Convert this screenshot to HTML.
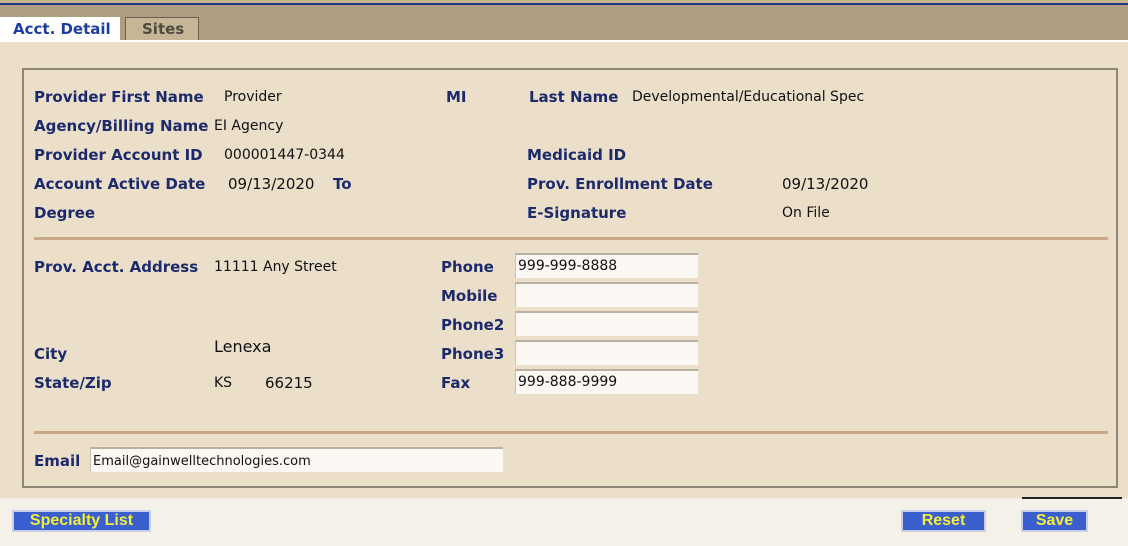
<!DOCTYPE html>
<html><head><style>
body{margin:0;width:1128px;height:546px;overflow:hidden;background:#f4f1e9;font-family:"DejaVu Sans","Liberation Sans",sans-serif;position:relative}
div{position:absolute}
.l{font-weight:bold;font-size:15px;color:#1c2a6b;white-space:nowrap}
.v{font-size:14px;color:#111;white-space:nowrap}
.in{background:#fbf7f3;border-top:2px solid #b8b0a0;border-left:1px solid #c8c0b0;height:25px;box-sizing:border-box;font-size:14px;padding:3px 0 0 2px;color:#111}
.b{background:#3b5fcf;color:#f2ef3a;font-weight:bold;text-align:center;border:2px solid #c8d0e8;box-sizing:border-box;height:22px;line-height:17px;font-family:"Liberation Sans Narrow","Liberation Sans",sans-serif;font-size:16px}
</style></head><body>
<div style="left:0;top:0;width:1128px;height:3px;background:#c9b58a"></div>
<div style="left:0;top:3px;width:1128px;height:2px;background:#23348a"></div>
<div style="left:0;top:5px;width:1128px;height:35px;background:#af9d80"></div>
<div style="left:0;top:40px;width:1128px;height:2px;background:#fff"></div>
<div style="left:0;top:17px;width:120px;height:25px;background:#fff"></div>
<div class="l" style="left:13px;top:20px;font-size:15px;color:#1a3fa0">Acct. Detail</div>
<div style="left:125px;top:17px;width:74px;height:23px;background:#c6b696;border:1px solid #6a6050;border-bottom:none;box-sizing:border-box"></div>
<div class="l" style="left:142px;top:20px;font-size:15px;color:#504a40">Sites</div>
<div style="left:0;top:42px;width:1128px;height:456px;background:#ebdfca"></div>
<div style="left:22px;top:68px;width:1096px;height:420px;border:2px solid #8e8676;box-sizing:border-box"></div>
<div style="left:34px;top:237px;width:1074px;height:3px;background:#c8a886"></div>
<div style="left:34px;top:431px;width:1074px;height:3px;background:#c8a886"></div>

<div class="l" style="left:34px;top:88px">Provider First Name</div><div class="v" style="left:224px;top:89px">Provider</div>
<div class="l" style="left:446px;top:88px">MI</div>
<div class="l" style="left:529px;top:88px">Last Name</div><div class="v" style="left:632px;top:89px">Developmental/Educational Spec</div>
<div class="l" style="left:34px;top:117px">Agency/Billing Name</div><div class="v" style="left:214px;top:118px">EI Agency</div>
<div class="l" style="left:34px;top:146px">Provider Account ID</div><div class="v" style="left:224px;top:147px">000001447-0344</div>
<div class="l" style="left:527px;top:146px">Medicaid ID</div>
<div class="l" style="left:34px;top:175px">Account Active Date</div><div class="v" style="left:228px;top:175px;font-size:15px">09/13/2020</div>
<div class="l" style="left:333px;top:175px">To</div>
<div class="l" style="left:527px;top:175px">Prov. Enrollment Date</div><div class="v" style="left:782px;top:175px;font-size:15px">09/13/2020</div>
<div class="l" style="left:34px;top:204px">Degree</div>
<div class="l" style="left:527px;top:204px">E-Signature</div><div class="v" style="left:782px;top:205px">On File</div>

<div class="l" style="left:34px;top:258px">Prov. Acct. Address</div><div class="v" style="left:214px;top:259px">11111 Any Street</div>
<div class="l" style="left:34px;top:345px">City</div><div class="v" style="left:214px;top:337px;font-size:16px">Lenexa</div>
<div class="l" style="left:34px;top:374px">State/Zip</div><div class="v" style="left:214px;top:375px">KS</div><div class="v" style="left:265px;top:374px;font-size:15px">66215</div>

<div class="l" style="left:441px;top:258px">Phone</div><div class="in" style="left:515px;top:253px;width:183px">999-999-8888</div>
<div class="l" style="left:441px;top:287px">Mobile</div><div class="in" style="left:515px;top:282px;width:183px"></div>
<div class="l" style="left:441px;top:316px">Phone2</div><div class="in" style="left:515px;top:311px;width:183px"></div>
<div class="l" style="left:441px;top:345px">Phone3</div><div class="in" style="left:515px;top:340px;width:183px"></div>
<div class="l" style="left:441px;top:374px">Fax</div><div class="in" style="left:515px;top:369px;width:183px">999-888-9999</div>

<div class="l" style="left:34px;top:452px">Email</div><div class="in" style="left:90px;top:447px;width:413px;font-size:13px;padding-top:5px">Email@gainwelltechnologies.com</div>

<div class="b" style="left:12px;top:510px;width:139px">Specialty List</div>
<div class="b" style="left:901px;top:510px;width:85px">Reset</div>
<div class="b" style="left:1021px;top:510px;width:67px">Save</div>
<div style="left:1022px;top:497px;width:100px;height:2px;background:#222"></div>
</body></html>
